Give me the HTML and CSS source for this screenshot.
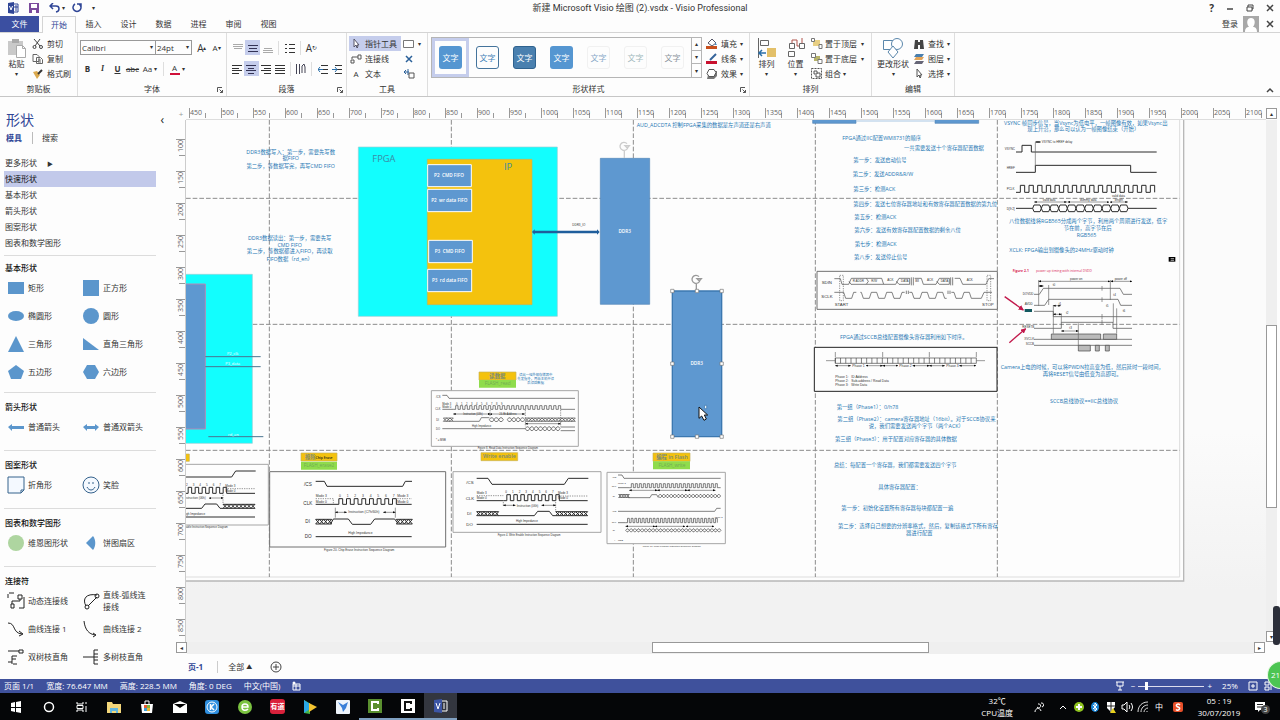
FILE: index.html
```html
<!DOCTYPE html>
<html lang="zh-CN">
<head>
    <meta charset="UTF-8">
    <meta name="viewport" content="width=device-width, initial-scale=1.0">
    <title>新建 Microsoft Visio 绘图 (2).vsdx - Visio Professional</title>
    <link rel="stylesheet" href="styles.css">
</head>
<body>
    <header class="titlebar">
        <div class="quick-access">
            <button aria-label="Visio"><svg width="12" height="12" viewBox="0 0 12 12"><path fill="#2f4596" d="M1 1l6-1v12l-6-1z"/><path fill="none" stroke="#fff" d="M2.500 4l1.500 4 1.500-4"/><path fill="none" stroke="#2f4596" d="M7 2h4v8H7M8 4h2v2H8zM8 8h2"/></svg></button>
            <button aria-label="保存"><svg width="10" height="10" viewBox="0 0 10 10"><path fill="#7b4a9c" d="M0 0h10v10H0z"/><path fill="#fff" d="M2 1h6v4H2zM3 7h4v3H3z"/></svg></button>
            <button aria-label="撤消"><svg width="12" height="10" viewBox="0 0 12 10"><path fill="none" stroke="#2f4596" stroke-width="1.500" d="M4 0L1 3l3 3M1 3h6c4 0 4 5 0 6"/></svg></button>
            <button class="tiny">▾</button>
            <button aria-label="重复"><svg width="10" height="10" viewBox="0 0 10 10"><path fill="none" stroke="#2f4596" stroke-width="1.500" d="M3 1a4 4 0 1 0 4 0M5 1h4v3"/></svg></button>
            <button class="tiny">▾</button>
        </div>
        <h1>新建 Microsoft Visio 绘图 (2).vsdx - Visio Professional</h1>
        <div class="window-buttons">
            <button class="help">?</button>
            <button aria-label="最小化"><svg width="8" height="8" viewBox="0 0 8 8"><path stroke="#444" stroke-width="1.500" d="M1 5h6"/></svg></button>
            <button aria-label="还原"><svg width="8" height="8" viewBox="0 0 8 8"><path fill="none" stroke="#444" d="M1 3h5v4H1zM2 3V1h5v4H6"/></svg></button>
            <button aria-label="关闭"><svg width="8" height="8" viewBox="0 0 8 8"><path stroke="#444" stroke-width="1.500" d="M1 1l6 6M7 1L1 7"/></svg></button>
        </div>
    </header>

    <nav class="tabs">
        <button class="tab file">文件</button>
        <button class="tab active">开始</button>
        <button class="tab">插入</button>
        <button class="tab">设计</button>
        <button class="tab">数据</button>
        <button class="tab">进程</button>
        <button class="tab">审阅</button>
        <button class="tab">视图</button>
        <div class="account">
            <a href="#">登录</a>
            <svg width="16" height="16" viewBox="0 0 16 16"><path fill="#a8a8a8" d="M0 0h16v16H0z"/><path fill="#fff" d="M2 16c0-4 2-5 4-5C3 7 4 2 8 2s5 5 2 9c2 0 4 1 4 5z"/></svg>
            <button aria-label="关闭文档"><svg width="8" height="8" viewBox="0 0 8 8"><path stroke="#444" stroke-width="1.500" d="M1 1l6 6M7 1L1 7"/></svg></button>
        </div>
    </nav>

    <section class="ribbon">
        <div class="group clipboard">
            <div class="group-body">
                <button class="big"><svg width="20" height="20" viewBox="0 0 20 20"><path fill="#c9c9c9" d="M1 3h15v14H1z"/><path fill="#aaa" d="M5 1h7v4H5z"/><path fill="#fff" stroke="#aaa" d="M9.500 7.500h6l3 3v9h-9zM15.500 7.500v3h3"/></svg><span>粘贴</span><i>▾</i></button>
                <div class="rows">
                    <button><svg width="12" height="10" viewBox="0 0 12 10"><path fill="none" stroke="#444" d="M2 0l6 7M8 0L3 7"/><circle cx="2.500" cy="8" r="1.500" fill="none" stroke="#444"/><circle cx="9" cy="8" r="1.500" fill="none" stroke="#444"/></svg>剪切</button>
                    <button><svg width="12" height="10" viewBox="0 0 12 10"><path fill="#fff" stroke="#666" d="M1 .5h4l2 2v5H1zM4.500 3.500h4l2 2v4h-6zM6 6h3M6 8h3"/></svg>复制</button>
                    <button><svg width="12" height="10" viewBox="0 0 12 10"><path fill="#dba94e" d="M1 3l4-1 3 4-3 4z"/><path stroke="#333" stroke-width="2" d="M6 5l4-4"/></svg>格式刷</button>
                </div>
            </div>
            <h2>剪贴板</h2>
        </div>
        <div class="group font">
            <div class="lines">
                <div class="line">
                    <span class="combo family"><select aria-label="字体"><option>Calibri</option></select></span><span class="combo size"><select aria-label="字号"><option>24pt</option></select></span>
                    <button class="icon large">A<sup>▴</sup></button>
                    <button class="icon">A<sup>▾</sup></button>
                </div>
                <div class="line">
                    <button class="icon"><b>B</b></button>
                    <button class="icon serif"><b><em>I</em></b></button>
                    <button class="icon"><b><u>U</u></b></button>
                    <button class="icon"><s>abc</s></button>
                    <button class="icon wide">Aa <i>▾</i></button>
                    <span class="rule"></span>
                    <button class="icon wide"><span class="red-bar">A</span> <i>▾</i></button>
                </div>
            </div>
            <h2>字体</h2><svg class="launcher" viewBox="0 0 6 6"><path fill="none" stroke="#555" d="M.5 5V.5H5M2.500 2.500l3 3M5.500 3v2.500H3"/></svg>
        </div>
        <div class="group paragraph">
            <div class="lines">
                <div class="line">
                    <button class="icon" aria-label="顶端对齐"><svg width="10" height="10"><path stroke="#aaa" d="M0 1.500h10M0 3.500h10M1 5.500h8"/></svg></button>
                    <button class="icon on" aria-label="中部对齐"><svg width="10" height="10"><path stroke="#335" d="M0 2.500h10M1 5.500h8M0 8.500h10"/></svg></button>
                    <button class="icon" aria-label="底端对齐"><svg width="10" height="10"><path stroke="#aaa" d="M1 5.500h8M0 7.500h10M0 9.500h10"/></svg></button>
                    <span class="rule"></span>
                    <button class="icon" aria-label="项目符号"><svg width="10" height="10"><path stroke="#333" d="M0 1.500h2M4 1.500h6M0 5.500h2M4 5.500h6M0 9.500h2M4 9.500h6"/></svg></button>
                    <span class="rule"></span>
                    <button class="icon large">A<sup>↻</sup></button>
                </div>
                <div class="line">
                    <button class="icon" aria-label="左对齐"><svg width="10" height="10"><path stroke="#333" d="M0 1.500h10M0 4.500h7M0 6.500h10M0 9.500h7"/></svg></button>
                    <button class="icon on" aria-label="居中"><svg width="10" height="10"><path stroke="#335" d="M0 1.500h10M2 4.500h6M0 6.500h10M2 9.500h6"/></svg></button>
                    <button class="icon" aria-label="右对齐"><svg width="10" height="10"><path stroke="#333" d="M0 1.500h10M3 4.500h7M0 6.500h10M3 9.500h7"/></svg></button>
                    <button class="icon" aria-label="两端对齐"><svg width="10" height="10"><path stroke="#333" d="M0 1.500h10M0 4.500h10M0 6.500h10M0 9.500h10"/></svg></button>
                    <span class="rule"></span>
                    <button class="icon" aria-label="文字方向"><svg width="10" height="10"><path fill="none" stroke="#445" d="M.5 0v10M3.500 0v10M6 9V2l2-2 1 3v6"/></svg></button>
                    <span class="rule"></span>
                    <button class="icon" aria-label="减少缩进"><svg width="10" height="10"><path stroke="#333" d="M3 1.500h7M5 5.500h5M3 9.500h7"/><path fill="none" stroke="#2a6ea8" d="M5 5.500H0M2 3L0 5.500 2 8"/></svg></button>
                    <button class="icon" aria-label="增加缩进"><svg width="10" height="10"><path stroke="#333" d="M3 1.500h7M5 5.500h5M3 9.500h7"/><path fill="none" stroke="#2a6ea8" d="M0 5.500h5M3 3l2 2.500L3 8"/></svg></button>
                </div>
            </div>
            <h2>段落</h2><svg class="launcher" viewBox="0 0 6 6"><path fill="none" stroke="#555" d="M.5 5V.5H5M2.500 2.500l3 3M5.500 3v2.500H3"/></svg>
        </div>
        <div class="group tools">
            <div class="group-body">
                <div class="rows">
                    <button class="on"><svg width="12" height="10" viewBox="0 0 12 10"><path fill="#fff" stroke="#556" d="M4 0v8l2-2 1 3 1-1-1-2h2z"/></svg>指针工具</button>
                    <button><svg width="12" height="10" viewBox="0 0 12 10"><path fill="none" stroke="#555" d="M1 6h3v3H1zM2 5V3h6M8 1h3v4H8z"/></svg>连接线</button>
                    <button><span class="letter">A</span>文本</button>
                </div>
                <div class="rows">
                    <button><svg width="12" height="10" viewBox="0 0 12 10"><path fill="#fff" stroke="#777" d="M.5 1.500h10v7H.5z"/></svg><i>▾</i></button>
                    <button aria-label="连接点"><svg width="12" height="8" viewBox="0 0 12 8"><path stroke="#2a6099" stroke-width="1.500" d="M3 1l6 6M9 1L3 7"/></svg></button>
                    <button aria-label="文本块"><svg width="12" height="10" viewBox="0 0 12 10"><path fill="none" stroke="#2a6099" d="M1 3h5M3 1L1 3l2 2M5 0v6"/><path fill="none" stroke="#555" d="M6 4h5v5H6z"/></svg></button>
                </div>
            </div>
            <h2>工具</h2>
        </div>
        <div class="group styles">
            <div class="group-body">
                <div class="gallery">
                    <button class="swatch selected"><span class="fill">文字</span></button>
                    <button class="swatch"><span class="outline">文字</span></button>
                    <button class="swatch"><span class="fill dark">文字</span></button>
                    <button class="swatch"><span class="fill">文字</span></button>
                    <button class="swatch"><span class="plain">文字</span></button>
                    <button class="swatch"><span class="plain teal">文字</span></button>
                    <button class="swatch"><span class="plain grey">文字</span></button>
                    <div class="gallery-nav"><button>▴</button><button>▾</button><button>▾</button></div>
                </div>
                <div class="rows">
                    <button><svg width="12" height="11" viewBox="0 0 12 11"><path fill="#fff" stroke="#556" d="M2 5l4-4 4 4-4 3z"/><path fill="#4a8ac0" d="M9 4l2 3h-2z"/><path fill="#c8501e" d="M0 8h11v3H0z"/></svg>填充<i>▾</i></button>
                    <button><svg width="12" height="11" viewBox="0 0 12 11"><path stroke="#35639a" stroke-width="2" d="M4 7l6-6"/><path fill="#c8102e" d="M0 8h11v3H0z"/></svg>线条<i>▾</i></button>
                    <button><svg width="12" height="10" viewBox="0 0 12 10"><path fill="#777" d="M3 2h8v5L8 10H1z"/><path fill="#fff" stroke="#555" d="M3 .5h5l2 3-2 4H3l-2-3z"/></svg>效果<i>▾</i></button>
                </div>
            </div>
            <h2>形状样式</h2><svg class="launcher" viewBox="0 0 6 6"><path fill="none" stroke="#555" d="M.5 5V.5H5M2.500 2.500l3 3M5.500 3v2.500H3"/></svg>
        </div>
        <div class="group arrange">
            <div class="group-body">
                <button class="big"><svg width="20" height="20" viewBox="0 0 20 20"><path fill="none" stroke="#666" d="M1.500 0v20M3.500 2.500h8v5h-8z"/><path fill="#e3c069" d="M10 10h9v9h-9z"/><path fill="none" stroke="#2a6ea8" stroke-width="1.500" d="M9 15H3M5 12l-3 3 3 3"/></svg><span>排列</span><i>▾</i></button>
                <button class="big"><svg width="20" height="20" viewBox="0 0 20 20"><path fill="none" stroke="#666" d="M3.500 5.500h5v5h-5zM13.500 5.500h5v5h-5zM2.500 13.500h6v5h-6z"/><path fill="none" stroke="#b0524a" d="M6 5V2h5v6h2M16 5V0"/></svg><span>位置</span><i>▾</i></button>
                <div class="rows">
                    <button><svg width="12" height="11" viewBox="0 0 12 11"><path fill="#e8cf83" d="M2 2h7v6H2z"/><path fill="#fff" stroke="#777" d="M.5.5h3v3h-3zM8 6.500h3v4H8z"/></svg>置于顶层<i class="far">▾</i></button>
                    <button><svg width="12" height="11" viewBox="0 0 12 11"><path fill="#b7b46a" d="M3 3h6v5H3z"/><path fill="#fff" stroke="#777" d="M.5.5h4v4h-4zM7 6.500h4v4H7z"/></svg>置于底层<i class="far">▾</i></button>
                    <button><svg width="12" height="11" viewBox="0 0 12 11"><path fill="none" stroke="#555" stroke-dasharray="2 1" d="M.5.5h10v10H.5z"/><path fill="none" stroke="#555" d="M3 3h3v3H3zM6 5h3v4H5V7"/></svg>组合<i>▾</i></button>
                </div>
            </div>
            <h2>排列</h2>
        </div>
        <div class="group edit">
            <div class="group-body">
                <button class="big"><svg width="20" height="20" viewBox="0 0 20 20"><g fill="#fff" stroke="#5b87ab"><path d="M.5 2.500h11v9H.5z"/><circle cx="14" cy="6" r="5.500"/><path d="M10 8l5 6-5 6-5-6z"/></g></svg><span>更改形状</span><i>▾</i></button>
                <div class="rows">
                    <button><svg width="12" height="10" viewBox="0 0 12 10"><path fill="#444" d="M2 1h3v2h2V1h3l1 9H7V6H5v4H1z"/></svg>查找<i>▾</i></button>
                    <button><svg width="12" height="10" viewBox="0 0 12 10"><path fill="#4a7fae" d="M3 0h8L9 3H1z"/><path fill="#e3a458" d="M3 3h8L9 6H1z"/><path fill="#667" d="M3 7h8l-2 3H1z"/></svg>图层<i>▾</i></button>
                    <button><svg width="12" height="10" viewBox="0 0 12 10"><path fill="#fff" stroke="#555" d="M4 0v8l2-2 1 3 1-1-1-2h2z"/></svg>选择<i>▾</i></button>
                </div>
            </div>
            <h2>编辑</h2>
        </div>
        <button class="collapse" aria-label="折叠功能区"><svg width="8" height="6"><path fill="none" stroke="#444" stroke-width="1.500" d="M1 5l3-3 3 3"/></svg></button>
    </section>

    <main class="workspace">
        <aside class="shapes">
            <div class="shapes-head">
                <h2>形状</h2>
                <button aria-label="折叠">‹</button>
            </div>
            <div class="shapes-tabs"><a href="#" class="current">模具</a><a href="#">搜索</a></div>
            <ul class="stencils">
                <li>更多形状 <span>▶</span></li>
                <li class="selected">快速形状</li>
                <li>基本形状</li>
                <li>箭头形状</li>
                <li>图案形状</li>
                <li>图表和数学图形</li>
            </ul>
            <section class="shape-group basic">
                <h3>基本形状</h3>
                <div class="shape-grid">
                    <div><svg viewBox="0 0 16 16"><path d="M0 2h16v12H0z"/></svg>矩形</div>
                    <div><svg viewBox="0 0 16 16"><path d="M0 0h16v16H0z"/></svg>正方形</div>
                    <div><svg viewBox="0 0 16 16"><ellipse cx="8" cy="8" rx="8" ry="5"/></svg>椭圆形</div>
                    <div><svg viewBox="0 0 16 16"><circle cx="8" cy="8" r="8"/></svg>圆形</div>
                    <div><svg viewBox="0 0 16 16"><path d="M8 0l8 16H0z"/></svg>三角形</div>
                    <div><svg viewBox="0 0 16 16"><path d="M0 2l16 12H0z"/></svg>直角三角形</div>
                    <div><svg viewBox="0 0 16 16"><path d="M8 1l8 6-3 8H3L0 7z"/></svg>五边形</div>
                    <div><svg viewBox="0 0 16 16"><path d="M4 1h8l4 7-4 7H4L0 8z"/></svg>六边形</div>
                </div>
            </section>
            <section class="shape-group">
                <h3>箭头形状</h3>
                <div class="shape-grid">
                    <div><svg viewBox="0 0 16 16"><path d="M0 8l4-3v2h12v3H4v2z"/></svg>普通箭头</div>
                    <div><svg viewBox="0 0 16 16"><path d="M0 8l4-3v2h8V5l4 3-4 4v-2H4v2z"/></svg>普通双箭头</div>
                </div>
            </section>
            <section class="shape-group">
                <h3>图案形状</h3>
                <div class="shape-grid">
                    <div><svg class="lined" viewBox="0 0 16 16"><path d="M0 0h16v13l-3 3H0zM16 13h-3v3"/></svg>折角形</div>
                    <div><svg class="lined" viewBox="0 0 16 16"><circle cx="8" cy="8" r="8"/><path d="M4 10c2 4 6 4 8 0M6 5v2M10 5v2"/></svg>笑脸</div>
                </div>
            </section>
            <section class="shape-group">
                <h3>图表和数学图形</h3>
                <div class="shape-grid">
                    <div><svg class="green" viewBox="0 0 16 16"><circle cx="8" cy="8" r="8"/></svg>维恩图形状</div>
                    <div><svg viewBox="0 0 16 16"><path d="M3 8l7-7c3 4 3 10 0 14z"/></svg>饼图扇区</div>
                </div>
            </section>
            <section class="shape-group">
                <h3>连接符</h3>
                <div class="shape-grid">
                    <div><svg class="wire" viewBox="0 0 16 16"><path d="M1 0h5M0 1v4M16 4v11h-5M3 11h3v4H3zM10 2h4v4h-4zM4 11V8h8V6"/></svg>动态连接线</div>
                    <div><svg class="wire" viewBox="0 0 16 16"><path d="M3 13C-1 6 3 0 14 2M5 13l9-9"/><circle cx="4" cy="14" r="2"/><circle cx="14" cy="3" r="2"/></svg>直线-弧线连接线</div>
                    <div><svg class="wire" viewBox="0 0 16 16"><path d="M0 2c8 0 4 10 14 11M11 10l4 3-4 2"/></svg>曲线连接 1</div>
                    <div><svg class="wire" viewBox="0 0 16 16"><path d="M1 0c1 9 5 13 11 14M10 12l3 2-3 2"/></svg>曲线连接 2</div>
                    <div><svg class="wire" viewBox="0 0 16 16"><path d="M0 2h11M11 1h4v3h-4zM0 13h4M4 7v8M4 7h5M4 10h4M5 15h4"/></svg>双树枝直角</div>
                    <div><svg class="wire" viewBox="0 0 16 16"><path d="M0 8h11M11 1v14M11 1h4M11 5h4M11 8h4M11 11h4M11 15h4"/></svg>多树枝直角</div>
                </div>
            </section>
        </aside>

        <section class="editor">
            <div class="ruler-row">
                <span class="corner">+</span>
                <div class="ruler-h" id="rulerH"></div>
                <button class="scroll-btn">▴</button>
            </div>
            <div class="canvas-row">
                <div class="ruler-v" id="rulerV"></div>
                <div class="canvas">
                    <svg class="drawing" viewBox="0 0 3240 1566">
                        <defs>
                            <marker id="tip" viewBox="0 0 8 8" refX="7" refY="4" markerWidth="8" markerHeight="8" markerUnits="userSpaceOnUse" orient="auto-start-reverse"><path d="M0 1l8 3-8 3z"/></marker>
                            <marker id="redTip" viewBox="0 0 8 8" refX="7" refY="4" markerWidth="16" markerHeight="16" markerUnits="userSpaceOnUse" orient="auto"><path fill="#c2184b" d="M0 0l8 4-8 4z"/></marker>
                            <g id="rotateHandle" fill="none" stroke-width="4"><path d="M11 2a12 12 0 1 1-3-9M2-1h13l-6 7zM0 14v22"/></g>
                            <g id="writeWave">
                                <path class="frame" d="M819 335h444v182H819z"/>
                                <g class="ink">
                                    <path d="M890 355h34l12 18h217l12-18h60M890 422h80M1138 422h85M955 467h108l10-13h35l10 13h9M890 493h333"/>
                                    <path data-clock="970 422 8 21 18"/>
                                    <path data-cross="890 461 6 11 12"/>
                                    <path data-cross="1127 461 8 12 12"/>
                                </g>
                                <path class="thin dotted" d="M890 407h80M1134 408h89M970 426v14M1127 426v26"/>
                                <path class="thin arrow" d="M970 436h36"/><path class="thin arrow" d="M1085 436h42"/>
                                <g class="label s12"><text x="859" y="373">/CS</text><text x="857" y="421">CLK</text><text x="861" y="465">DI</text><text x="859" y="498">DO</text></g>
                                <g class="label s9"><text x="890" y="403">Mode 3</text><text x="890" y="418">Mode 0</text><text x="1134" y="403">Mode 3</text><text x="1134" y="418">Mode 0</text><text x="976" y="400" data-digits="8" data-step="20">0</text><text x="1010" y="440">Instruction (06h)</text><text x="1008" y="487">High Impedance</text></g>
                                <text class="label s8" x="953" y="527">Figure 4. Write Enable Instruction Sequence Diagram</text>
                            </g>
                        </defs>

                        <path class="sheet" d="M-3-3h2996v1386H-3z"/>
                        <path class="margin" d="M2981 0v1371H0"/>
                        <path class="breaks" d="M250 0v1371M796 0v1371M1342 0v1371M1888 0v1371M2434 0v1371M0 235h2981M0 613h2981M0 991h2981"/>

                        <!-- left board -->
                        <g transform="translate(-558 -60)">
                            <path class="cyan" d="M540 523h217v507H540z"/>
                            <path class="block pink" d="M540 552h76v435h-76z"/>
                            <path class="bus" d="M616 770h166M616 800h166M625 1010h165"/>
                            <g class="tag"><text x="698" y="766">P2_clk</text><text x="698" y="796">P3_data</text><text x="700" y="1007">rd_en</text></g>
                        </g>

                        <!-- FPGA and DDR3 -->
                        <g transform="translate(162 -60)">
                            <g class="note mid">
                                <text x="152" y="162">DDR3数据写入：第一步，需要先写数</text><text x="152" y="181">据FIFO</text><text x="152" y="204">第二步，等数据写完，再写CMD FIFO</text>
                                <text x="149" y="420">DDR3数据读出：第一步，需要先写</text><text x="149" y="440">CMD FIFO</text><text x="149" y="460">第二步，等数据都进入FIFO，再读取</text><text x="149" y="482">FIFO数据（rd_en）</text>
                            </g>
                            <path class="cyan" d="M355 141h597v508H355z"/>
                            <path class="amber" d="M562 178h314v436H562z"/>
                            <text class="big-label" x="397" y="187">FPGA</text><text class="big-label" x="792" y="210">IP</text>
                            <path class="block boxed" d="M563 194h131v66H563zM563 268h132v67H563zM566 421h131v67H566zM563 508h132v67H563z"/>
                            <g class="caption"><text x="627" y="230">P2&#160; CMD FIFO</text><text x="628" y="306">P2&#160; wr data FIFO</text><text x="629" y="459">P3&#160; CMD FIFO</text><text x="629" y="547">P3&#160; rd data FIFO</text></g>
                            <path class="link" d="M876 396l8-8v4h187v-4l8 8-8 8v-4H884v4z"/>
                            <text class="label s9" x="997" y="378">DDR3_IO</text>
                            <path class="block" d="M1081 175h148v438h-148z"/>
                            <g class="caption"><text x="1154" y="399">DDR3</text></g>
                            <use href="#rotateHandle" x="1153" y="138" stroke="#ccc"/>
                            <text class="note" x="1190" y="81">AUD_ADCDTA 控制FPGA采集的数据是左声道还是右声道</text>
                        </g>

                        <!-- flash timing diagrams -->
                        <g transform="translate(-18 720)">
                            <use href="#writeWave"/>
                            <use href="#writeWave" x="-998" y="-22"/>
                            <path class="amber" d="M10 282h18v22H10zM363 279h108v24H363zM897 36h111v24H897zM903 278h110v24H903z"/>
                            <path class="lime" d="M363 305h108v24H363zM897 60h111v23H897z"/>
                            <g class="badge"><text x="416" y="297">擦除<tspan class="black">Chip Erase</tspan></text><text class="soft" x="417" y="322">FLASH_erase2</text><text x="952" y="54">读数据</text><text class="soft" x="953" y="76">FLASH_read</text><text x="958" y="294">Write enable</text></g>
                            <g class="note mid small"><text x="1067" y="49">读出一组外部存储器中</text><text x="1067" y="61">先发指令，再由主机中读</text><text x="1067" y="73">后读回数据</text></g>

                            <path class="frame dark" d="M269 335h528v226H269z"/>
                            <g class="ink">
                                <path d="M407 364h26l8 15h227l8-15h20M407 433h58M649 433h46M452 492l8-15h45l12 16h55l12-16h60l10 14M407 530h288"/>
                                <path data-clock="465 433 8 23 17"/>
                                <path data-cross="407 485 4 12 14"/>
                                <path data-cross="649 485 4 12 14"/>
                            </g>
                            <path class="thin dotted" d="M407 416h53v15M652 416h43"/>
                            <path class="thin" d="M466 443v30M646 443v30"/>
                            <path class="thin arrow" d="M466 457h34"/><path class="thin arrow" d="M610 457h36"/>
                            <g class="label s14"><text x="372" y="378">/CS</text><text x="370" y="434">CLK</text><text x="376" y="488">DI</text><text x="374" y="535">DO</text></g>
                            <g class="label s10"><text x="407" y="412">Mode 3</text><text x="407" y="430">Mode 0</text><text x="652" y="412">Mode 3</text><text x="652" y="430">Mode 0</text><text x="477" y="412" data-digits="8" data-step="23">0</text><text x="505" y="460">Instruction (C7h/60h)</text><text x="505" y="523">High Impedance</text></g>
                            <text class="label s9" x="432" y="574">Figure 20. Chip Erase Instruction Sequence Diagram</text>

                            <path class="frame" d="M754 92h441v167H754z"/>
                            <g class="ink fine">
                                <path d="M787 106h14l6 9h378M787 148h33M1142 148h43M820 184h78l6-11h24M787 206h249M1142 201h43M1142 212h43"/>
                                <path data-clock="820 148 23 14 11"/>
                                <path data-cross="790 179 3 10 10"/>
                                <path data-hex="928 179 3 14 11"/>
                                <path data-hex="982 179 4 13 11"/>
                                <path data-cross="1036 179 15 10 10"/>
                                <path data-hex="1036 206 8 13 11"/>
                            </g>
                            <path class="thin dotted" d="M1036 150v50M1142 150v50M930 150v20"/>
                            <path class="thin arrow" d="M820 162h110"/><path class="thin arrow" d="M930 162h104"/><path class="thin arrow" d="M1036 191h106"/>
                            <g class="label s8"><text x="768" y="115">/CS</text><text x="766" y="150">CLK</text><text x="769" y="182">DI</text><text x="768" y="209">DO</text><text x="787" y="134">Mode 3</text><text x="787" y="145">Mode 0</text><text x="828" y="135" data-digits="10" data-step="15">0</text><text x="850" y="165">Instruction (03h)</text><text x="958" y="165">24-Bit Address</text><text x="876" y="201">High Impedance</text><text x="768" y="243">* = MSB</text><text x="893" y="268">Figure 8. Read Data Instruction Sequence Diagram</text></g>
                        </g>

                        <!-- selected block -->
                        <g transform="translate(1182 420)">
                            <path class="amber" d="M219 579h111v25H219z"/><path class="lime" d="M219 604h111v24H219z"/>
                            <g class="badge"><text x="276" y="596">编程 in Flash</text><text class="soft" x="276" y="621">FLASH_write</text></g>
                            <path class="frame" d="M81 637h355v214H81z"/>
                            <g class="ink fine">
                                <path d="M114 645h12l6 10h290M114 683h34M412 683h10M145 713h65l5-9h15l5 9M114 754h290l6-9h12M114 788h23"/>
                                <path data-clock="148 683 22 12 12"/>
                                <path data-clock="137 788 25 11 13"/>
                                <path data-cross="116 708 4 8 9"/>
                                <path data-hex="235 708 17 11 9"/>
                                <path data-hex="137 811 26 11 9"/>
                            </g>
                            <path class="thin arrow" d="M148 691h84"/><path class="thin arrow" d="M232 691h90"/><path class="thin arrow" d="M322 691h84"/>
                            <path class="thin arrow" d="M137 799h88"/><path class="thin arrow" d="M225 799h90"/><path class="thin arrow" d="M318 799h84"/>
                            <g class="label s7"><text x="97" y="655">/CS</text><text x="95" y="682">CLK</text><text x="98" y="710">DI</text><text x="97" y="757">/CS</text><text x="95" y="788">CLK</text><text x="98" y="814">DI</text><text x="114" y="672">Mode 3</text><text x="404" y="775">Mode 3</text><text x="103" y="843">* = MSB</text><text x="188" y="860">Figure 17. Page Program Instruction Sequence Diagram</text></g>
                            <path class="block selected" d="M277 93h148v437H277z"/>
                            <g class="caption"><text x="350" y="316">DDR3</text></g>
                            <use href="#rotateHandle" x="349" y="57" stroke="#999"/>
                            <path class="handles" d="M272 88h10v10h-10zM346 88h10v10h-10zM420 88h10v10h-10zM272 306h10v10h-10zM420 306h10v10h-10zM272 525h10v10h-10zM346 525h10v10h-10zM420 525h10v10h-10z"/>
                            <path class="pointer" d="M357 441v34l8-7 7 13 7-4-6-12h10z"/><path fill="#fff" stroke="#2f6ea8" stroke-width="2" d="M374 436h6v10h-6z"/>
                        </g>

                        <!-- IIC notes -->
                        <g transform="translate(1842 -30)">
                            <path class="block" d="M38 28h130v12H38zM405 28h131v12H405z"/><path class="bar-link" d="M168 33h237"/>
                            <g class="note">
                                <text x="127" y="91">FPGA通过IIC配置WM8731的顺序</text><text x="312" y="119">一共需要发送十个寄存器配置数据</text>
                                <text x="160" y="157">第一步：发送启动信号</text><text x="158" y="199">第二步：发送ADDR&amp;R/W</text><text x="160" y="244">第三步：检测ACK</text><text x="160" y="287">第四步：发送七位寄存器地址和有效寄存器配置数据的第九位</text>
                                <text x="163" y="327">第五步：检测ACK</text><text x="163" y="367">第六步：发送有效寄存器配置数据的剩余八位</text><text x="164" y="409">第七步：检测ACK</text><text x="162" y="448">第八步：发送停止信号</text>
                                <text x="120" y="686">FPGA通过SCCB总线配置摄像头寄存器利用如下时序。</text>
                            </g>
                            <path class="frame dark" d="M51 484h541v114H51z"/>
                            <path class="ink fine" d="M103 506h18l5 17h20l8-18h45l6 9-6 9h-46l-6-9M199 505h46l6 18h36l10-18h32v18h-32l-8-9M334 502v24M340 502v24M344 505h20l6 18h38l10-18h30v18h-30l-8-9M452 502v24M458 502v24M464 505h16l8 18h70l8-17h16M199 523h52"/>
                            <path class="ink fine" d="M103 547h28l6 18h18l6-18h8M181 547h3l6 18h18l6-18h16l6 18h18l6-18h16l6 18h18l6-18h8M328 547h8l6 18h18l6-18h16l6 18h18l6-18h16l6 18h6M454 547h8l6 18h18l6-18h16l6 18h30l8-18h24M319 542v10M325 542v10M444 542v10M450 542v10"/>
                            <path class="thin dotted" d="M119 496h11v76h-11zM561 496h11v76h-11z"/>
                            <g class="label s12"><text x="65" y="521">SDIN</text><text x="64" y="563">SCLK</text><text x="104" y="588">START</text><text x="546" y="588">STOP</text></g>
                            <g class="label s9"><text x="158" y="517">R ADDR</text><text x="214" y="517">R/W</text><text x="262" y="514">ACK</text><text x="303" y="517">DATA</text><text x="346" y="517">B8</text><text x="381" y="514">ACK</text><text x="422" y="517">DATA</text><text x="500" y="514">ACK</text></g>
                        </g>

                        <!-- SCCB notes -->
                        <g transform="translate(1842 660)">
                            <path class="frame black" d="M43 22h548v132H43z"/>
                            <path class="ink fine" data-cells="106 54 27 423 16"/>
                            <path class="thin" d="M78 62h28M529 62h26M106 36v16M248 36v16M388 36v16M529 36v16"/>
                            <path class="thin arrow" d="M106 77h46"/><path class="thin arrow" d="M198 77h50"/><path class="thin arrow" d="M248 77h46"/><path class="thin arrow" d="M338 77h50"/><path class="thin arrow" d="M388 77h46"/><path class="thin arrow" d="M478 77h50"/>
                            <g class="label s10"><text x="157" y="80">Phase 1</text><text x="298" y="80">Phase 2</text><text x="439" y="80">Phase 3</text><text x="106" y="115">Phase 1:</text><text x="154" y="115">ID Address</text><text x="106" y="127">Phase 2:</text><text x="154" y="127">Sub-address / Read Data</text><text x="106" y="138">Phase 3:</text><text x="154" y="138">Write Data</text></g>
                            <g class="note">
                                <text x="110" y="206">第一组（Phase1）：0/h78</text><text x="112" y="243">第二组（Phase2）：camera寄存器地址（16bit）。对于SCCB协议来</text><text x="206" y="264">说，我们需要发送两个字节（两个ACK）</text><text x="105" y="302">第三组（Phase3）：用于配置对应寄存器的具体数据</text>
                                <text x="102" y="382">总结：每配置一个寄存器，我们都需要发送四个字节</text><text x="235" y="446">具体寄存器配置：</text><text x="124" y="511">第一步：初始化设置所有寄存器每块都配置一遍</text><text x="114" y="565">第二步：选择自己想要的分辨率格式，然后，复制该格式下所有寄存</text><text x="318" y="586">器进行配置</text>
                                <text x="602" y="87">Camera上电的时候，可以将PWDN拉高变为低，然后延时一段时间，</text><text x="728" y="107">再将RESET信号由低变为高即可。</text><text x="750" y="188">SCCB总线协议==IIC总线协议</text>
                            </g>
                        </g>

                        <!-- camera timing -->
                        <g transform="translate(2412 -45)">
                            <g class="note">
                                <text x="42" y="61">VSYNC 帧同步信号，当Vsync为低电平，一帧图像有效，如果Vsync出</text><text x="112" y="78">现上升沿，那么可以认为一帧图像结束（开始）</text>
                                <text x="57" y="355">八位数据线将RGB565分成两个字节，利用两个周期进行发送，低字</text><text x="221" y="376">节在前，高字节在后</text><text x="260" y="397">RGB565</text><text x="58" y="440">XCLK: FPGA输出到摄像头的24MHz驱动时钟</text>
                            </g>
                            <g class="ink">
                                <path d="M78 141h18v-20h28v20h376M78 202h58v-21h286v21h78M78 310h50M414 310h86"/>
                                <path data-clock="78 262 16 26 21"/>
                                <path data-hex="128 310 11 26 20"/>
                            </g>
                            <path class="thin" d="M136 112v70"/><path class="thin arrow" d="M136 111h16"/>
                            <path class="thin arrow" d="M133 291h97"/><path class="thin arrow" d="M233 291h124"/><path class="thin arrow" d="M360 291h53"/>
                            <g class="label s9"><text x="44" y="134">VSYNC</text><text x="50" y="193">HREF</text><text x="50" y="254">PCLK</text><text x="50" y="314">D[9:2]</text><text x="155" y="114">VSYNC to HREF delay</text><text x="158" y="288">valid data</text><text x="270" y="288">dummy data</text><text x="366" y="277">valid data</text><text x="374" y="287">length</text></g>
                            <path d="M536 456h20v14h-20z"/><path stroke="#fff" stroke-width="2" d="M542 461h10M542 466h10"/>
                            <text class="crimson bold" x="68" y="500">Figure 2-1</text><text class="crimson" x="138" y="500">power up timing with internal DVDD</text>
                            <path class="thin arrow" d="M146 529h214"/><path class="thin arrow" d="M362 529h64"/>
                            <path class="ink fine" d="M132 568h16l12-18h230l10 18h26M132 601h32l12-18h208l8 18h34M132 619h58v16h235M132 670h82v-18h155v18h57M132 703h294M132 721h294"/>
                            <path class="grey-box" d="M184 687h148v16H184zM340 687h40v16h-40zM265 721h36v17h-36zM316 721h12v17h-12zM346 721h12v17h-12z"/>
                            <path class="thin" d="M146 525v78M361 525v60M176 540v60M190 600v86M214 625v28M265 655v66M370 595v58M380 610v76M336 543v14M336 577v14M336 627v16M336 645v14"/>
                            <path class="thin arrow" d="M146 543h14"/><path class="thin arrow" d="M190 602h22"/><path class="thin arrow" d="M190 628h24"/><path class="thin arrow" d="M214 678h51"/>
                            <path fill="#12585f" d="M104 612h22v9h-22z"/>
                            <g class="label s9"><text x="240" y="525">power on</text><text x="374" y="525">power off</text><text x="98" y="570">DOVDD</text><text x="104" y="601">AVDD</text><text x="97" y="669">RESETB</text><text x="103" y="705">XVCLK</text><text x="107" y="721">SCCB</text><text x="188" y="543">t0</text><text x="206" y="600">t1</text><text x="228" y="626">t2</text><text x="238" y="672">t3</text><text x="370" y="574">t4</text><text x="348" y="607">t5</text><text x="398" y="622">t6</text></g>
                            <path class="red-arrow" d="M44 575l56 40"/><path class="red-arrow" d="M58 713l49-42"/>
                        </g>
                    </svg>
                </div>
                <div class="scroll-v"><span class="thumb"></span><button class="scroll-btn">▾</button></div>
            </div>
            <div class="scroll-row">
                <button class="scroll-btn">◂</button>
                <div class="scroll-h"><span class="thumb"></span></div>
                <button class="scroll-btn">▸</button>
            </div>
            <div class="page-tabs">
                <a href="#" class="page">页-1</a>
                <button>全部 <i>▲</i></button>
                <button aria-label="插入页"><svg width="12" height="12" viewBox="0 0 12 12"><circle cx="6" cy="6" r="5" fill="none" stroke="#444"/><path stroke="#444" d="M6 3v6M3 6h6"/></svg></button>
            </div>
        </section>
    </main>

    <footer class="statusbar">
        <span>页面 1/1</span><span>宽度: 76.647 MM</span><span>高度: 228.5 MM</span><span>角度: 0 DEG</span><span>中文(中国)</span>
        <svg width="10" height="10" viewBox="0 0 10 10"><path fill="none" stroke="#fff" d="M1 3h7v6H1zM1 5h7M4 3v6"/><circle cx="2" cy="2" r="1.500" fill="#fff"/></svg>
        <div class="zoom">
            <svg width="10" height="10" viewBox="0 0 10 10"><path fill="none" stroke="#fff" d="M1 1h8M2 1v4h6V1M5 5v4M3 9h4"/></svg>
            <button>−</button>
            <input type="range" aria-label="缩放" min="0" max="100" value="10">
            <button>+</button>
            <span>25%</span>
            <svg width="10" height="10" viewBox="0 0 10 10"><path fill="none" stroke="#fff" d="M1 1h8v8H1zM3 5h4M5 3v4"/></svg>
            <svg width="10" height="10" viewBox="0 0 10 10"><path fill="none" stroke="#fff" d="M1 1h4v3H1zM1 6h4v3H1zM7 1v8"/></svg>
        </div>
    </footer>

    <footer class="taskbar">
        <div class="apps">
            <button aria-label="开始"><svg viewBox="0 0 14 14"><path fill="#fff" d="M2 3l4-1v5H2zM7 2l5-1v6H7zM2 8h4v4l-4-1zM7 8h5v5l-5-1z"/></svg></button>
            <button aria-label="Cortana"><svg viewBox="0 0 14 14"><circle cx="7" cy="7" r="4.500" fill="none" stroke="#fff" stroke-width="1.500"/></svg></button>
            <button aria-label="任务视图"><svg viewBox="0 0 14 14"><path fill="none" stroke="#fff" d="M2 2v2h6V2M2 12v-2h6v2M2 5.500h6v3H2zM11 2v2M11 6v6"/></svg></button>
            <button aria-label="文件资源管理器"><svg viewBox="0 0 14 14"><path fill="#f3d67a" d="M0 2h5l1 2h8v9H0z"/><path fill="#63b7e0" d="M3 8h8v5H9v-2H5v2H3z"/></svg></button>
            <button aria-label="应用商店"><svg viewBox="0 0 14 14"><path fill="none" stroke="#fff" d="M5 4V1h4v3"/><path fill="#fff" d="M1 4h12l-1 9H2z"/><path fill="#e55b34" d="M4 5h3v3H4z"/><path fill="#7fb93f" d="M7 5h3v3H7z"/><path fill="#3a9fd8" d="M4 8h3v3H4z"/><path fill="#f0b52c" d="M7 8h3v3H7z"/></svg></button>
            <button aria-label="邮件"><svg viewBox="0 0 14 14"><path fill="#fff" d="M0 4l7-3 7 3v9H0z"/><path d="M1 4h12L7 8z"/></svg></button>
            <button aria-label="K"><svg viewBox="0 0 14 14"><rect width="14" height="14" rx="3" fill="#2f8fe0"/><circle cx="7" cy="7" r="5" fill="none" stroke="#fff"/><path fill="none" stroke="#fff" stroke-width="1.500" d="M5.500 4v6M9 4L6 7l3 3"/></svg></button>
            <button aria-label="浏览器"><svg viewBox="0 0 14 14"><circle cx="7" cy="7" r="7" fill="#7cc341"/><path fill="none" stroke="#fff" stroke-width="1.500" d="M4 7h6c0-4-6-4-6 0s4 4 6 2"/></svg></button>
            <button class="netease">有道</button>
            <button aria-label="视频"><svg viewBox="0 0 14 14"><path fill="#44b549" d="M1 0l6 3.500V14l-6-1z"/><path fill="#2aa7e6" d="M1 0l6 4v5l-6 4z"/><path fill="#f4c430" d="M6 3l8 4-8 5z"/></svg></button>
            <button aria-label="雷鸟"><svg viewBox="0 0 14 14"><rect width="14" height="14" rx="1" fill="#eef4fb"/><path fill="#3a7fd8" d="M2 2l5 3 5-3-2 6-3 4-1-4z"/></svg></button>
            <button class="running" aria-label="Camtasia"><svg viewBox="0 0 14 14"><path fill="#5a8f2f" d="M0 0h14v14H0z"/><path fill="none" stroke="#fff" stroke-width="2" d="M10 5V3H4v8h6V9"/></svg></button>
            <button class="running" aria-label="录像机"><svg viewBox="0 0 14 14"><path fill="#fff" d="M0 0h14v14H0z"/><path fill="none" stroke="#111" stroke-width="2" d="M10 5V3H4v8h6V9"/></svg></button>
            <button class="running current" aria-label="Visio"><svg viewBox="0 0 14 14"><path fill="#3c55a5" d="M0 1l8-1v14l-8-1z"/><path fill="none" stroke="#fff" d="M2 4l2 6 2-6M8 2h5v10H8M10 4v6"/></svg></button>
        </div>
        <div class="tray">
            <p class="temp">32℃<br>CPU温度</p>
            <svg viewBox="0 0 12 12"><path fill="none" stroke="#fff" d="M2 11c0-4 5-5 6-1M5 3a2 2 0 1 1-1 3M8 2a2 2 0 1 1 1 4"/></svg>
            <svg viewBox="0 0 12 12"><path fill="none" stroke="#fff" d="M3 8l3-3 3 3"/></svg>
            <svg viewBox="0 0 12 12"><circle cx="6" cy="6" r="5" fill="#8fc31f"/><path stroke="#fff" stroke-width="2" d="M6 3v6M3 6h6"/></svg>
            <svg viewBox="0 0 12 12"><ellipse cx="6" cy="6" rx="4" ry="5" fill="#1b86d8"/><path fill="none" stroke="#fff" d="M4 4l4 4-2 2V2l2 2-4 4"/></svg>
            <svg viewBox="0 0 12 12"><path fill="#fff" d="M2 1h8v5L6 11 2 7z"/><path stroke="#222" d="M6 1v9M2 5h8"/><path fill="#e8d11e" d="M8 7l3 5H5z"/></svg>
            <svg viewBox="0 0 12 12"><path fill="none" stroke="#fff" d="M1 4h2l3-3v10L3 8H1zM8 4c1 1 1 3 0 4M10 2c2 3 2 5 0 8"/></svg>
            <svg viewBox="0 0 12 12"><path fill="none" stroke="#ddd" d="M1 11C1 5 5 1 11 1M4 11c0-4 3-7 7-7M7 11c0-2 2-4 4-4M10 10v1"/></svg>
            <span class="ime">中</span>
            <svg viewBox="0 0 12 12"><rect x="1" y="1" width="10" height="10" rx="2" fill="#e8502a"/><path fill="none" stroke="#fff" stroke-width="1.500" d="M8 4C6 2 3 4 5 5.500l2 1c2 1-1 4-3 2"/></svg>
            <p class="clock">05 : 19<br>30/07/2019</p>
            <button class="notify" aria-label="通知"><svg viewBox="0 0 12 12"><path fill="#fff" d="M1 1h10v8H6l-2 2V9H1z"/><path stroke="#222" d="M3 3.500h6M3 6h6"/></svg><span>3</span></button>
        </div>
    </footer>
    <div class="side-handle"></div>
    <div class="float-ball">21</div>
    <script src="script.js"></script>
</body>
</html>
```

FILE: styles.css
```css
* {
    box-sizing: border-box;
}

body {
    margin: 0;
    height: 100vh;
    display: flex;
    flex-direction: column;
    overflow: hidden;
    background: #fdfdfd;
    color: #333;
    font: 8px/12px "Open Sans", "Noto Sans CJK SC", sans-serif;
}

button {
    display: flex;
    align-items: center;
    justify-content: center;
    margin: 0;
    padding: 0;
    border: 0;
    background: none;
    color: inherit;
    font: inherit;
}

a {
    color: inherit;
    text-decoration: none;
}

h1, h2, h3, p, ul {
    margin: 0;
    padding: 0;
    font-size: inherit;
    font-weight: normal;
    list-style: none;
}

svg {
    flex: none;
}

i {
    font-style: normal;
    font-size: 6px;
}

/* title bar */
.titlebar {
    display: grid;
    grid-template-columns: 1fr auto 1fr;
    align-items: center;
    height: 16px;
}

.titlebar h1 {
    font-family: Roboto, "Noto Sans CJK SC", sans-serif;
    font-size: 9px;
}

.quick-access {
    display: flex;
    gap: 10px;
    padding-left: 7px;
}

.quick-access .tiny {
    width: 6px;
    margin: 0 -4px 0 -11px;
    font-size: 6px;
}

.quick-access .tiny:last-child {
    margin-left: -2px;
}

.window-buttons {
    display: flex;
    justify-content: flex-end;
    gap: 12px;
    padding-right: 6px;
}

.help {
    font-weight: bold;
    font-size: 10px;
}

.tabs {
    display: flex;
    height: 17px;
    border-bottom: 1px solid #d4d4d4;
}

.tab {
    width: 35px;
}

.tab.file {
    width: 39px;
    margin-right: 3px;
    background: #3b4fa1;
    color: #fff;
}

.tab.active {
    width: 34px;
    height: 17px;
    border: 1px solid #d4d4d4;
    border-bottom: 0;
    background: #fdfdfd;
    color: #2f4596;
}

.account {
    display: flex;
    align-items: center;
    gap: 5px;
    margin-left: auto;
    padding-right: 6px;
}

.account button {
    margin-left: 1px;
    width: 9px;
}

/* ribbon */
.ribbon {
    position: relative;
    display: flex;
    height: 64px;
    border-bottom: 1px solid #c6c6c6;
}

.group {
    position: relative;
    display: flex;
    flex-direction: column;
    padding: 3px 2px 0;
    border-right: 1px solid #dedede;
}

.group h2 {
    text-align: center;
    line-height: 16px;
}

.group-body {
    display: flex;
    height: 45px;
}

.clipboard { width: 78px; }
.font { width: 149px; }
.paragraph { width: 120px; }
.tools { width: 81px; }
.styles { width: 322px; }
.arrange { width: 122px; }
.edit { width: 83px; }

.launcher {
    position: absolute;
    right: 3px;
    bottom: 3px;
    width: 6px;
    height: 6px;
}

.big {
    flex-direction: column;
    justify-content: flex-start;
    width: 29px;
    padding-top: 2px;
}

.big span {
    white-space: nowrap;
}

.big i {
    line-height: 8px;
}

.edit .big {
    width: 38px;
}

.rows button {
    gap: 3px;
    justify-content: flex-start;
    height: 15px;
    padding: 0 1px;
    white-space: nowrap;
}

.rows .on,
.icon.on {
    background: #c5cdec;
}

.rows .far {
    margin-left: 2px;
}

.arrange .rows button {
    gap: 2px;
}

.tools .rows:first-child {
    width: 53px;
}

.tools .rows:first-child button {
    width: 52px;
}

.letter {
    width: 12px;
    text-align: center;
}

.lines {
    height: 45px;
    padding: 1px 0 2px;
}

.line {
    display: flex;
    align-items: center;
    height: 21px;
}

.paragraph .line {
    padding-left: 1px;
}

.icon {
    width: 15px;
    height: 15px;
}

.icon.large {
    font-size: 10px;
}

.icon.wide {
    width: 20px;
    gap: 2px;
}

.icon sup {
    font-size: 6px;
    line-height: 6px;
}

.serif {
    font-family: "Liberation Serif", serif;
}

.red-bar {
    width: 10px;
    line-height: 10px;
    border-bottom: 2px solid #d0103a;
}

.rule {
    width: 1px;
    height: 14px;
    margin: 0 3px;
    background: #dedede;
}

.combo {
    position: relative;
    height: 15px;
    border: 1px solid #999;
}

.combo::after {
    content: "▾";
    position: absolute;
    right: 2px;
    top: 0;
    font-size: 6px;
}

.combo select {
    width: 100%;
    height: 13px;
    padding: 0 1px;
    border: 0;
    background: none;
    appearance: none;
    color: inherit;
    font: inherit;
}

.family {
    width: 77px;
}

.size {
    width: 37px;
    margin-right: 2px;
    border-left: 0;
}

.gallery {
    display: flex;
    height: 41px;
    margin: 1px 3px 0 1px;
    border: 1px solid #b5b5b5;
}

.swatch {
    width: 37px;
    border: 3px solid transparent;
}

.swatch.selected {
    border-color: #c5cdec;
}

.swatch span {
    width: 23px;
    height: 23px;
    border: 1px solid transparent;
    border-radius: 3px;
    line-height: 21px;
}

.fill {
    background: #5596d1;
    color: #fff;
}

.swatch .fill.dark {
    border-color: #2f628f;
    background: #4a80af;
}

.swatch .outline {
    border-color: #45749c;
    color: #4382b8;
}

.swatch .plain {
    border-color: #f1f1f1;
    color: #86a8c8;
}

.swatch .teal {
    color: #a0b8bc;
}

.swatch .grey {
    color: #8a949c;
}

.gallery-nav {
    width: 10px;
    border-left: 1px solid #b5b5b5;
}

.gallery-nav button {
    width: 100%;
    height: 13px;
    border-bottom: 1px solid #b5b5b5;
    font-size: 6px;
}

.gallery-nav button:last-child {
    border-bottom: 0;
}

.collapse {
    position: absolute;
    right: 6px;
    bottom: 3px;
}

/* shapes pane */
.workspace {
    display: flex;
    flex: 1;
    min-height: 0;
}

.shapes {
    width: 176px;
    padding: 13px 20px 0 4px;
    overflow: hidden;
}

.shapes-head {
    display: flex;
    justify-content: space-between;
    padding-left: 2px;
    color: #2f4596;
}

.shapes-head h2 {
    font-size: 14px;
    line-height: 20px;
}

.shapes-head button {
    margin-right: -8px;
    color: #222;
    font-size: 12px;
}

.shapes-tabs {
    display: flex;
    margin: 2px 0 11px 2px;
}

.shapes-tabs a {
    padding-right: 10px;
}

.shapes-tabs .current {
    border-right: 1px solid #bbb;
    margin-right: 9px;
    color: #2f4596;
    font-weight: bold;
}

.stencils {
    padding-bottom: 4px;
}

.stencils li {
    height: 16px;
    padding-left: 1px;
    line-height: 16px;
}

.stencils li span {
    margin-left: 8px;
    font-size: 6px;
}

.stencils .selected {
    background: #c2c9ea;
    color: #111;
}

.shape-group {
    border-top: 1px solid #dcdcdc;
    padding: 8px 0 9px 1px;
}

.shape-group.basic {
    padding: 6px 0 6px 1px;
}

.shape-group h3 {
    color: #111;
    font-weight: 500;
}

.shape-grid {
    display: grid;
    grid-template-columns: 75px 1fr;
    grid-auto-rows: 28px;
    padding-left: 3px;
}

.shape-grid div {
    display: flex;
    align-items: center;
    gap: 4px;
    max-width: 66px;
}

.shape-grid svg {
    width: 16px;
    height: 16px;
    overflow: visible;
    fill: #5b96cc;
}

.shape-grid .lined {
    fill: #f4f9ff;
    stroke: #35628c;
}

.shape-grid .green {
    fill: #aed5a0;
}

.shape-grid .wire {
    fill: none;
    stroke: #222;
}

/* editor */
.editor {
    display: flex;
    flex: 1;
    flex-direction: column;
    min-width: 0;
}

.ruler-row {
    display: flex;
    height: 23px;
    padding: 11px 3px 0 0;
}

.corner {
    width: 10px;
    color: #999;
    text-align: center;
}

.ruler-h {
    display: flex;
    flex: 1;
    min-width: 0;
    overflow: hidden;
    padding-left: 3px;
    border-bottom: 1px solid #ddd;
    color: #666;
    font-size: 7px;
}

.ruler-h span {
    flex: none;
    width: 32px;
    height: 10px;
    border-left: 1px solid #999;
    background: linear-gradient(#999, #999) 15px 5px / 1px 5px no-repeat;
    line-height: 10px;
}

.scroll-btn {
    flex: none;
    width: 11px;
    height: 11px;
    border: 1px solid #999;
    background: #fff;
    font-size: 6px;
}

.canvas-row {
    display: flex;
    flex: 1;
    min-height: 0;
    padding-right: 3px;
}

.ruler-v {
    width: 10px;
    padding-top: 19px;
    overflow: hidden;
    border-right: 1px solid #ccc;
    color: #666;
    font-size: 7px;
}

.ruler-v span {
    display: block;
    height: 32px;
    border-top: 1px solid #999;
    background: linear-gradient(#999, #999) 3px 15px / 6px 1px no-repeat;
    line-height: 9px;
    text-align: right;
    writing-mode: vertical-rl;
}

.ruler-v b {
    display: block;
    width: 9px;
    font-weight: normal;
    text-align: right;
    transform: rotate(180deg);
}

.canvas {
    flex: 1;
    min-width: 0;
    overflow: hidden;
    background: linear-gradient(#fbfbfb 60%, #f2f2f2 90%);
}

.drawing {
    display: block;
    width: 1080px;
    height: 522px;
}

.scroll-v {
    display: flex;
    flex-direction: column;
    width: 11px;
    background: #efefef;
}

.scroll-v .thumb {
    height: 35%;
    margin: 205px 0 auto;
    border: 1px solid #999;
    background: #fff;
}

.scroll-row {
    display: flex;
    height: 12px;
    padding-right: 15px;
}

.scroll-h {
    display: flex;
    flex: 1;
    justify-content: center;
    padding-left: 80px;
    background: #efefef;
}

.scroll-h .thumb {
    width: 28%;
    height: 11px;
    border: 1px solid #999;
    background: #fff;
}

.scroll-h .thumb {
    margin-left: 60px;
}

.page-tabs {
    display: flex;
    align-items: center;
    gap: 18px;
    height: 25px;
    padding-left: 12px;
}

.page-tabs .page {
    padding-right: 14px;
    border-right: 1px solid #ccc;
    margin-right: -8px;
    color: #2f4596;
    font-weight: bold;
}

.page-tabs button i {
    margin-left: 2px;
}

/* drawing */
.sheet { fill: #fdfdfd; stroke: #b8b8b8; stroke-width: 4; }
.margin { fill: none; stroke: #ddd; stroke-width: 3; }
.breaks { fill: none; stroke: #8c8c8c; stroke-width: 3; stroke-dasharray: 14 6; }
.cyan { fill: #12fefe; stroke: #9ad0d4; stroke-width: 2; }
.amber { fill: #f4c20d; stroke: #c7b25a; stroke-width: 2; }
.lime { fill: #8fdc4c; }
.block { fill: #5e98d0; stroke: #5588b8; stroke-width: 2; }
.block.pink { stroke: #b48ab8; stroke-width: 3; }
.block.boxed { stroke: #fff; stroke-width: 3; }
.block.selected { stroke: #3c78b0; stroke-width: 4; }
.link { fill: #1f5e9c; }
.bus { stroke: #4a7590; stroke-width: 3; }
.bar-link { stroke: #a9c7e4; stroke-width: 3; }
.note { fill: #2577b3; font-size: 16px; }
.note.small { font-size: 10px; }
.mid, .caption, .badge, .tag { text-anchor: middle; }
.caption { fill: #fff; font-size: 14px; font-weight: 600; }
.tag { fill: #fff; font-size: 12px; }
.big-label { fill: #3b8aa5; font-size: 28px; }
.badge { fill: #7a8a78; font-size: 16px; font-weight: 600; }
.badge .black { fill: #222; font-size: 10px; }
.badge .soft { fill: #72aa55; font-size: 14px; font-weight: 400; }
.frame { fill: #fdfdfd; stroke: #a5a5a5; stroke-width: 3; }
.frame.dark { stroke: #707070; }
.frame.black { stroke: #222; }
.ink { fill: none; stroke: #2a2a2a; stroke-width: 3; }
.ink.fine { stroke: #444; stroke-width: 2; }
.thin { fill: none; stroke: #666; stroke-width: 2; }
.dotted { stroke-dasharray: 4 3; }
.arrow { marker-start: url(#tip); marker-end: url(#tip); }
.label { fill: #333; font-family: "Liberation Sans", sans-serif; }
.s14 { font-size: 14px; }
.s12 { font-size: 13px; }
.s10 { font-size: 10px; }
.s9 { font-size: 9px; }
.s8 { font-size: 8px; }
.s7 { font-size: 7px; }
.handles { fill: #fff; stroke: #777; stroke-width: 2; }
.pointer { fill: #fff; stroke: #111; stroke-width: 3; }
.grey-box { fill: #bbb; stroke: #444; stroke-width: 2; }
.crimson { fill: #d81f55; font-size: 10px; }
.crimson.bold { font-weight: bold; }
.red-arrow { fill: none; stroke: #c2184b; stroke-width: 4; marker-end: url(#redTip); }

/* bottom bars */
.statusbar {
    display: flex;
    align-items: center;
    gap: 12px;
    height: 14px;
    padding: 0 6px 0 4px;
    background: #3f519c;
    color: #fff;
}

.zoom {
    display: flex;
    align-items: center;
    gap: 6px;
    margin-left: auto;
}

.zoom span {
    width: 24px;
    text-align: center;
}

.zoom input {
    width: 66px;
    height: 10px;
    margin: 0 -3px;
    appearance: none;
    background: linear-gradient(#dde, #dde) 0 5px / 100% 1px no-repeat;
}

.zoom input::-webkit-slider-thumb {
    appearance: none;
    width: 3px;
    height: 8px;
    background: #fff;
}

.taskbar {
    display: flex;
    justify-content: space-between;
    height: 27px;
    background: #050608;
    color: #fff;
}

.apps {
    display: grid;
    grid-template-columns: repeat(14, 1fr);
    width: 457px;
}

.apps svg {
    width: 14px;
    height: 14px;
}

.running {
    border-bottom: 2px solid #7f9fc0;
}

.current.running {
    background: #33363f;
}

.apps .netease {
    place-self: center;
    width: 15px;
    height: 15px;
    border-radius: 3px;
    background: #d9213b;
    font-size: 7px;
    font-weight: bold;
}

.tray {
    display: flex;
    align-items: center;
    gap: 4px;
    padding-right: 14px;
}

.tray p {
    line-height: 12px;
    text-align: center;
}

.tray svg {
    width: 12px;
    height: 12px;
}

.temp {
    margin-right: 16px;
}

.temp + svg {
    margin-right: 8px;
}

.ime {
    width: 12px;
    margin-right: 3px;
    text-align: center;
}

.clock {
    width: 50px;
    margin-left: 6px;
}

.notify {
    position: relative;
    margin-left: 6px;
}

.notify span {
    position: absolute;
    right: -4px;
    top: 4px;
    width: 9px;
    height: 9px;
    border-radius: 50%;
    background: #444;
    font-size: 7px;
    line-height: 9px;
}

.side-handle {
    position: absolute;
    right: 0;
    top: 606px;
    width: 7px;
    height: 39px;
    border-radius: 3px;
    background: #2c2f3a;
}

.float-ball {
    position: absolute;
    right: -14px;
    top: 661px;
    width: 27px;
    height: 28px;
    padding-left: 3px;
    border: 1px solid #e8f8e4;
    border-radius: 50%;
    background: #4cc552;
    color: #fff;
    line-height: 26px;
}
```

FILE: script.js
```js
// rulers: one label every 50 mm
const rulerH = document.getElementById('rulerH');
for (let mm = 450; mm <= 2100; mm += 50) {
    const tick = document.createElement('span');
    tick.textContent = mm;
    rulerH.append(tick);
}

const rulerV = document.getElementById('rulerV');
for (let mm = 100; mm <= 850; mm += 50) {
    const tick = document.createElement('span');
    const label = document.createElement('b');
    label.textContent = mm;
    tick.append(label);
    rulerV.append(tick);
}

// repeated parts of the timing diagrams: "x y count width height"
const waves = {
    clock: (x, y, n, w, h) => `M${x} ${y}` + `h${w / 2}v${-h}h${w / 2}v${h}`.repeat(n),
    hex: (x, y, n, w, h) => `M${x} ${y}` + `l4 ${-h / 2}h${w - 8}l4 ${h / 2}l-4 ${h / 2}h${8 - w}l-4 ${-h / 2}m${w} 0`.repeat(n),
    cross: (x, y, n, w, h) => `M${x} ${y - h / 2}` + `h${w}l${-w} ${h}h${w}l${-w} ${-h}m${w} 0`.repeat(n),
    cells: (x, y, n, w, h) => `M${x} ${y}h${w}v${h}h${-w}z` + Array.from({ length: n }, (_, i) => `M${x + i * w / n} ${y}v${h}`).join('')
};

for (const name in waves) {
    document.querySelectorAll(`[data-${name}]`).forEach(path => {
        path.setAttribute('d', waves[name](...path.dataset[name].split(' ').map(Number)));
    });
}

// clock pulse numbers
document.querySelectorAll('[data-digits]').forEach(text => {
    const x = Number(text.getAttribute('x'));
    const count = Number(text.dataset.digits);
    text.textContent = Array.from({ length: count }, (_, i) => i % 10).join('');
    text.setAttribute('x', Array.from({ length: count }, (_, i) => x + i * text.dataset.step).join(' '));
});
```
